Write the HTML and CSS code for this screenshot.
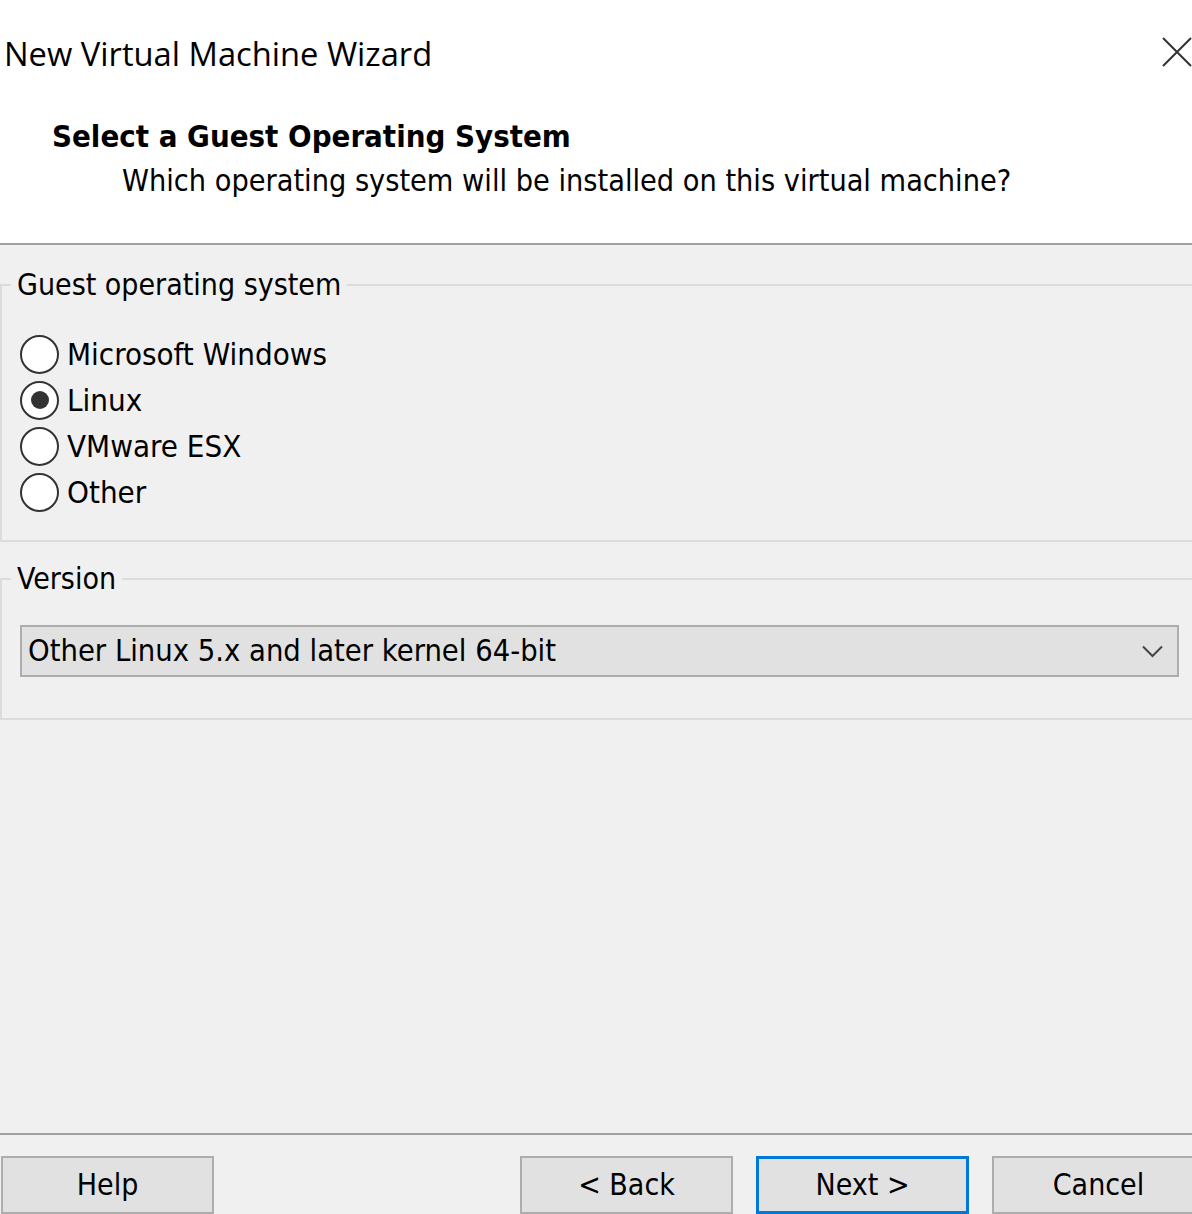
FILE: index.html
```html
<!DOCTYPE html>
<html lang="en">
<head>
<meta charset="utf-8">
<title>New Virtual Machine Wizard</title>
<link rel="stylesheet" href="styles.css">
</head>
<body>
<div class="dialog">
  <header class="header">
    <div class="titlebar">
      <span class="title">New Virtual Machine Wizard</span>
      <svg class="close" viewBox="0 0 30 30" aria-label="Close"><path d="M1 1 L29 29 M29 1 L1 29" stroke="#333" stroke-width="2" fill="none"/></svg>
    </div>
    <h1 class="heading">Select a Guest Operating System</h1>
    <p class="subheading">Which operating system will be installed on this virtual machine?</p>
  </header>
  <main class="body">
    <fieldset class="group group-os">
      <legend>Guest operating system</legend>
      <label class="radio"><span class="radio-circle"></span><span>Microsoft Windows</span></label>
      <label class="radio"><span class="radio-circle checked"></span><span>Linux</span></label>
      <label class="radio"><span class="radio-circle"></span><span>VMware ESX</span></label>
      <label class="radio"><span class="radio-circle"></span><span>Other</span></label>
    </fieldset>
    <fieldset class="group group-version">
      <legend>Version</legend>
      <div class="select">
        <span>Other Linux 5.x and later kernel 64-bit</span>
        <svg class="chevron" viewBox="0 0 21 13"><path d="M1 1.5 L10.5 11 L20 1.5" stroke="#444" stroke-width="2" fill="none"/></svg>
      </div>
    </fieldset>
  </main>
  <footer class="footer">
    <button class="btn btn-help">Help</button>
    <div class="actions">
      <button class="btn">&lt; Back</button>
      <button class="btn btn-primary">Next &gt;</button>
      <button class="btn">Cancel</button>
    </div>
  </footer>
</div>
</body>
</html>
```

FILE: styles.css
```css
html, body {
  margin: 0;
  padding: 0;
}
body {
  width: 1192px;
  height: 1214px;
  overflow: hidden;
  background: #f0f0f0;
  font-family: "DejaVu Sans Condensed", "DejaVu Sans", sans-serif;
  font-stretch: condensed;
  color: #000;
}
.dialog {
  display: flex;
  flex-direction: column;
  height: 1214px;
}
.header {
  flex: none;
  background: #fff;
  height: 243px;
  border-bottom: 2px solid #a0a0a0;
}
.titlebar {
  display: flex;
  justify-content: space-between;
  align-items: flex-start;
  padding: 34px 0 0 4px;
  height: 40px;
}
.title {
  font-family: "Open Sans", sans-serif;
  font-stretch: normal;
  font-size: 32.7px;
  line-height: 40px;
}
.close {
  width: 30px;
  height: 30px;
  margin-top: 3px;
}
.heading {
  margin: 44px 0 0 52px;
  font-size: 30.9px;
  line-height: 36px;
  font-weight: bold;
}
.subheading {
  margin: 9px 0 0 122px;
  font-size: 30.3px;
  line-height: 36px;
}
.body {
  flex: 1;
  overflow: hidden;
}
.group {
  margin: 25px -13px 0 0;
  padding: 31px 24px 0 18px;
  border: 2px solid #dcdcdc;
  min-inline-size: 0;
}
.group legend {
  padding: 0 6px;
  margin-left: -9px;
  font-size: 30px;
  line-height: 30px;
}
.group-os {
  padding-bottom: 25px;
}
.group-version {
  margin-top: 22px;
  padding-bottom: 41px;
}
.radio {
  display: flex;
  align-items: center;
  gap: 8px;
  height: 46px;
  font-size: 31px;
  line-height: 46px;
}
.radio-circle {
  width: 35px;
  height: 35px;
  border: 2px solid #333;
  border-radius: 50%;
  background: #fff;
  display: flex;
  align-items: center;
  justify-content: center;
  flex: none;
}
.radio-circle.checked::after {
  content: "";
  width: 18px;
  height: 18px;
  border-radius: 50%;
  background: #333;
}
.select {
  display: flex;
  align-items: center;
  justify-content: space-between;
  height: 48px;
  border: 2px solid #adadad;
  background: #e1e1e1;
  padding: 0 14px 0 6px;
  font-size: 30.6px;
  line-height: 48px;
}
.chevron {
  width: 21px;
  height: 13px;
}
.footer {
  flex: none;
  display: flex;
  justify-content: space-between;
  border-top: 2px solid #a0a0a0;
  padding-top: 21px;
  margin-right: -13px;
}
.actions {
  display: flex;
  gap: 23px;
}
.btn {
  width: 213px;
  height: 58px;
  box-sizing: border-box;
  border: 2px solid #adadad;
  background: #e1e1e1;
  font: inherit;
  font-size: 30px;
  line-height: 54px;
  text-align: center;
  padding: 0;
  color: #000;
}
.btn-help {
  margin-left: 1px;
}
.btn-primary {
  border: 3px solid #0078d7;
  line-height: 52px;
}
```
